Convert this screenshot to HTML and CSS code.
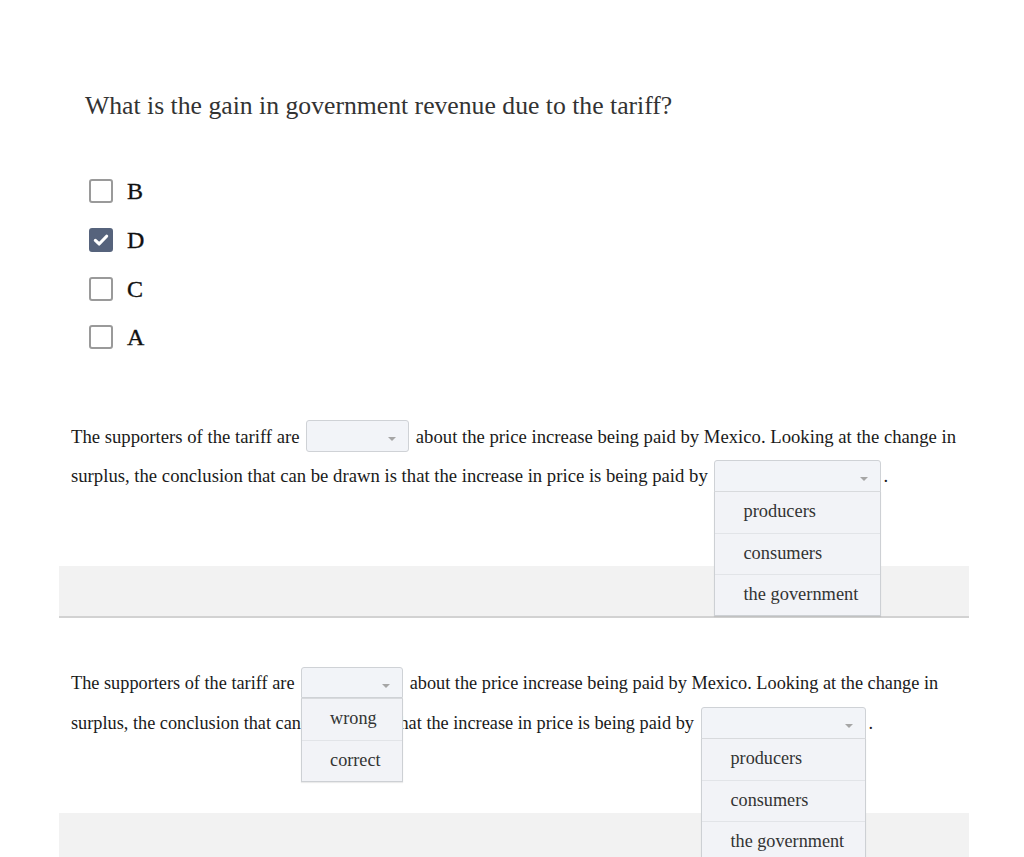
FILE: index.html
```html
<!DOCTYPE html>
<html lang="en">
<head>
<meta charset="utf-8">
<title>Tariff question</title>
<link rel="stylesheet" href="styles.css">
</head>
<body>
  <section class="question">
    <h2 class="question-title">What is the gain in government revenue due to the tariff?</h2>
    <ul class="choices">
      <li class="choice"><span class="box"></span><span class="choice-label">B</span></li>
      <li class="choice"><span class="box checked"><svg viewBox="0 0 24 24" width="18" height="18"><path d="M4.5 12.5l5 4.8L19.5 7" fill="none" stroke="#fff" stroke-width="4.2" stroke-linecap="round" stroke-linejoin="round"/></svg></span><span class="choice-label">D</span></li>
      <li class="choice"><span class="box"></span><span class="choice-label">C</span></li>
      <li class="choice"><span class="box"></span><span class="choice-label">A</span></li>
    </ul>
  </section>

  <section class="card card-one">
    <p class="fill">The supporters of the tariff are <span class="select sel-a"><span class="caret"></span></span> about the price increase being paid by Mexico. Looking at the change in surplus, the conclusion that can be drawn is that the increase in price is being paid by <span class="select sel-b open"><span class="caret"></span><span class="menu"><span class="item">producers</span><span class="item">consumers</span><span class="item">the government</span></span></span>.</p>
    <div class="card-footer"></div>
  </section>

  <section class="card card-two">
    <p class="fill">The supporters of the tariff are <span class="select sel-c open"><span class="caret"></span><span class="menu"><span class="item">wrong</span><span class="item">correct</span></span></span> about the price increase being paid by Mexico. Looking at the change in surplus, the conclusion that can be drawn is that the increase in price is being paid by <span class="select sel-d open"><span class="caret"></span><span class="menu"><span class="item">producers</span><span class="item">consumers</span><span class="item">the government</span></span></span>.</p>
    <div class="card-footer"></div>
  </section>
</body>
</html>
```

FILE: styles.css
```css
html, body {
  margin: 0;
  padding: 0;
  background: #fff;
}

body {
  font-family: "Liberation Serif", "Times New Roman", serif;
  color: #222;
  overflow: hidden;
  height: 857px;
}

/* ---------- multiple choice question ---------- */
.question {
  padding: 88px 0 0 85px;
}

.question-title {
  margin: 0;
  font-size: 25.7px;
  font-weight: normal;
  line-height: 36px;
  color: #333;
}

.choices {
  list-style: none;
  margin: 43px 0 0 4px;
  padding: 0;
}

.choice {
  display: flex;
  align-items: center;
  height: 48.7px;
}

.box {
  box-sizing: border-box;
  width: 24px;
  height: 24px;
  border: 2.5px solid #9a9a9a;
  border-radius: 3px;
  background: #fff;
  display: flex;
  align-items: center;
  justify-content: center;
}

.box.checked {
  background: #56637c;
  border-color: #56637c;
}

.choice-label {
  margin-left: 14px;
  font-size: 24px;
  line-height: 28px;
  color: #111;
  -webkit-text-stroke: 0.35px #111;
}

/* ---------- fill-in-the-blank cards ---------- */
.card {
  margin-left: 59px;
  width: 910px;
}

.card-one {
  margin-top: 55px;
}

.card-two {
  margin-top: 45px;
}

.fill {
  margin: 0;
  padding: 0 12px;
  font-size: 18.7px;
  line-height: 39.5px;
  color: #1a1a1a;
}

.card-two .fill {
  font-size: 18.3px;
  line-height: 40px;
}

.card-footer {
  height: 50px;
  background: #f2f2f2;
  border-bottom: 2px solid #d2d2d2;
}

.card-one .card-footer {
  margin-top: 70px;
}

.card-two .card-footer {
  margin-top: 70px;
}

/* dropdown control */
.select {
  position: relative;
  display: inline-block;
  box-sizing: border-box;
  height: 32px;
  vertical-align: middle;
  margin: -4px 2px 0;
  background: #f2f4f8;
  border: 1px solid #cfd2d6;
  border-radius: 3px;
}

.select.open {
  border-radius: 3px 3px 0 0;
}

.sel-a { width: 103px; }
.sel-b { width: 167px; }
.sel-c { width: 102px; height: 31px; }
.sel-d { width: 165px; margin-left: 3px; }

.caret {
  position: absolute;
  right: 12px;
  top: 16px;
  width: 0;
  height: 0;
  border-left: 4px solid transparent;
  border-right: 4px solid transparent;
  border-top: 4px solid #a6a6a6;
}

.menu {
  position: absolute;
  left: -1px;
  right: -1px;
  top: 30px;
  z-index: 2;
  display: flex;
  flex-direction: column;
  background: #f2f3f7;
  border: 1px solid #cdd0d4;
  border-top-color: #d8dadd;
  border-left-width: 1.5px;
  border-right-width: 1.5px;
  box-shadow: 0 1px 1px rgba(0, 0, 0, 0.08);
}

.item {
  box-sizing: border-box;
  height: 41px;
  padding-left: 28px;
  font-size: 18.4px;
  line-height: 38px;
  color: #333;
  border-top: 1px solid #e2e4e8;
  white-space: nowrap;
}

.card-two .item {
  font-size: 18.2px;
}

.item:first-child {
  border-top: 0;
}
```
